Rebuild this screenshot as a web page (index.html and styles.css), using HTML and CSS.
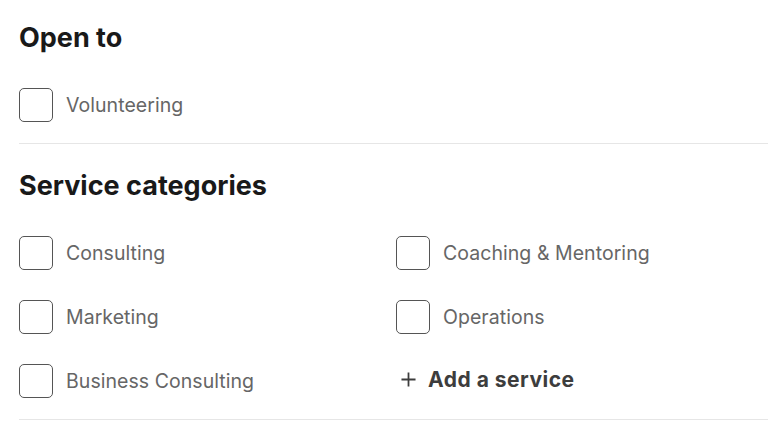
FILE: index.html
```html
<!DOCTYPE html>
<html lang="en">
<head>
<meta charset="utf-8">
<title>Open to</title>
<link rel="stylesheet" href="styles.css">
</head>
<body>
<main class="page">
  <section class="section">
    <h2 class="section-title">Open to</h2>
    <div class="options single">
      <label class="option"><span class="box"></span><span class="option-label">Volunteering</span></label>
    </div>
  </section>
  <hr class="divider">
  <section class="section">
    <h2 class="section-title">Service categories</h2>
    <div class="options grid">
      <label class="option"><span class="box"></span><span class="option-label">Consulting</span></label>
      <label class="option"><span class="box"></span><span class="option-label">Coaching &amp; Mentoring</span></label>
      <label class="option"><span class="box"></span><span class="option-label">Marketing</span></label>
      <label class="option"><span class="box"></span><span class="option-label">Operations</span></label>
      <label class="option"><span class="box"></span><span class="option-label">Business Consulting</span></label>
      <button class="add-service" type="button">
        <svg class="plus" width="16" height="16" viewBox="0 0 16 16" aria-hidden="true"><path d="M8 0.5v15M0.5 8h15" stroke="currentColor" stroke-width="1.9" fill="none"/></svg>
        <span>Add a service</span>
      </button>
    </div>
  </section>
  <hr class="divider">
</main>
</body>
</html>
```

FILE: styles.css
```css
* { box-sizing: border-box; }
html, body { margin: 0; padding: 0; background: #ffffff; }
body {
  font-family: Inter, "Liberation Sans", sans-serif;
  color: #191919;
  overflow: hidden;
}
.page {
  padding: 22px 0 0 19px;
}
.section-title {
  margin: 0;
  font-size: 27px;
  line-height: 32px;
  font-weight: 700;
  color: #191919;
  letter-spacing: 0;
}
.options {
  margin-top: 34px;
}
.options.grid {
  display: grid;
  grid-template-columns: 377px 1fr;
  row-gap: 30px;
}
.option {
  display: flex;
  align-items: center;
  height: 34px;
}
.box {
  width: 34px;
  height: 34px;
  border: 1.5px solid #555555;
  border-radius: 5px;
  flex: none;
}
.option-label {
  margin-left: 13px;
  font-size: 19.5px;
  letter-spacing: 0.05px;
  color: #666666;
}
.divider {
  margin: 21px 0 0 0;
  border: 0;
  border-top: 1px solid #e6e6e6;
  height: 0;
}
.divider + .section { margin-top: 26px; }
.add-service {
  display: flex;
  align-items: center;
  height: 34px;
  margin-top: -2px;
  padding: 0 0 0 5px;
  border: 0;
  background: none;
  font-family: inherit;
  font-size: 21px;
  font-weight: 700;
  letter-spacing: 0.5px;
  color: #3d3d3d;
  cursor: pointer;
}
.plus {
  width: 15px;
  height: 15px;
  margin-right: 12px;
  color: #3d3d3d;
}
```
